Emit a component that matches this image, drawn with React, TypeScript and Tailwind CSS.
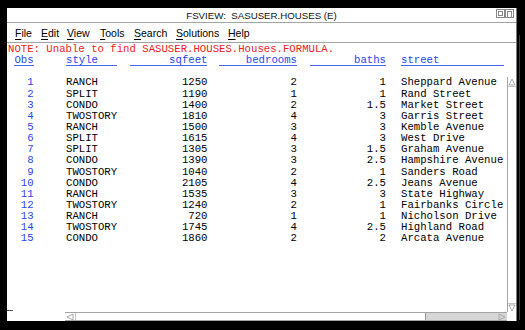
import React from "react";

const rows: [string, string, string, string, string, string][] = [
  ["1", "RANCH", "1250", "2", "1", "Sheppard Avenue"],
  ["2", "SPLIT", "1190", "1", "1", "Rand Street"],
  ["3", "CONDO", "1400", "2", "1.5", "Market Street"],
  ["4", "TWOSTORY", "1810", "4", "3", "Garris Street"],
  ["5", "RANCH", "1500", "3", "3", "Kemble Avenue"],
  ["6", "SPLIT", "1615", "4", "3", "West Drive"],
  ["7", "SPLIT", "1305", "3", "1.5", "Graham Avenue"],
  ["8", "CONDO", "1390", "3", "2.5", "Hampshire Avenue"],
  ["9", "TWOSTORY", "1040", "2", "1", "Sanders Road"],
  ["10", "CONDO", "2105", "4", "2.5", "Jeans Avenue"],
  ["11", "RANCH", "1535", "3", "3", "State Highway"],
  ["12", "TWOSTORY", "1240", "2", "1", "Fairbanks Circle"],
  ["13", "RANCH", "720", "1", "1", "Nicholson Drive"],
  ["14", "TWOSTORY", "1745", "4", "2.5", "Highland Road"],
  ["15", "CONDO", "1860", "2", "2", "Arcata Avenue"],
];

const menu = [
  { label: "File", w: "w-[26px]" },
  { label: "Edit", w: "w-[26px]" },
  { label: "View", w: "w-[33px]" },
  { label: "Tools", w: "w-[34px]" },
  { label: "Search", w: "w-[42px]" },
  { label: "Solutions", w: "w-[52px]" },
  { label: "Help", w: "w-[30px]" },
];

// column cells: Obs, style, sqfeet, bedrooms, baths, street
const cell = [
  "ml-[6px] w-[19.6px] text-right",
  "ml-[32.4px] w-[51px] text-left",
  "ml-[13px] w-[77.5px] text-right",
  "ml-[11.5px] w-[78px] text-right",
  "ml-[13px] w-[76px] text-right",
  "ml-[15px] w-[103px] text-left",
];

function Arrow({ dir }: { dir: "up" | "down" | "left" | "right" }) {
  const pts = {
    up: "1,7 4,1 7,7",
    down: "1,1 4,7 7,1",
    left: "7,1 1,4 7,7",
    right: "1,1 7,4 1,7",
  }[dir];
  return (
    <svg width="8" height="8" viewBox="0 0 8 8">
      <polygon points={pts} fill="none" stroke="#a8a8a8" strokeWidth="1" />
    </svg>
  );
}

export default function App() {
  return (
    <div className="w-[525px] h-[330px] bg-black flex items-start overflow-hidden">
      <div className="ml-[7px] mt-[8px] w-[510px] h-[313px] bg-white flex flex-col border-r border-[#7c7c7c]">
        {/* title bar */}
        <div className="h-[14px] flex items-center relative">
          <div className="flex-1 text-center text-[9.7px] leading-[14px] pt-px text-[#111] whitespace-pre font-['Liberation_Sans',sans-serif]">
            {"FSVIEW:  SASUSER.HOUSES (E)"}
          </div>
          <svg className="absolute right-[2px] top-[1px]" width="18" height="9" viewBox="0 0 18 9">
            <rect x="0.5" y="0.5" width="8" height="8" fill="white" stroke="#888" />
            <rect x="2.5" y="2.5" width="4" height="4" fill="none" stroke="#888" />
            <rect x="9.5" y="0.5" width="8" height="8" fill="white" stroke="#888" />
            <rect x="11.5" y="2.5" width="4" height="6" fill="none" stroke="#888" />
          </svg>
        </div>
        <div className="h-px bg-[#a4a4a4]" />
        {/* menu bar */}
        <div className="h-[19px] flex items-center pl-[8px] pt-[2px] text-[10.5px] text-black font-['Liberation_Sans',sans-serif]">
          {menu.map((m) => (
            <span key={m.label} className={m.w}>
              <span className="underline underline-offset-2">{m.label[0]}</span>
              {m.label.slice(1)}
            </span>
          ))}
        </div>
        <div className="h-px bg-[#a4a4a4]" />
        {/* content */}
        <div className="flex-1 flex min-h-0">
          <div className="flex-1 flex flex-col pl-px pt-[1px] font-['Liberation_Mono',monospace] text-[10.67px] leading-[11.14px] whitespace-pre">
            <div className="text-[#ee1c1c]">NOTE: Unable to find SASUSER.HOUSES.Houses.FORMULA.</div>
            <div className="flex text-[#2a46ee]">
              {["Obs", "style", "sqfeet", "bedrooms", "baths", "street"].map((h, i) => (
                <span key={h} className={`${cell[i]} leading-[10.14px] border-b border-[#4a64f0]`}>
                  {h}
                </span>
              ))}
            </div>
            <div className="h-[11.14px]" />
            {rows.map((r) => (
              <div key={r[0]} className="flex text-black">
                {r.map((v, i) => (
                  <span key={i} className={`${cell[i]} ${i === 0 ? "text-[#2a46ee]" : ""}`}>
                    {v}
                  </span>
                ))}
              </div>
            ))}
            <div className="mt-auto mb-[1px] -ml-px w-[6px] h-px bg-[#555]" />
          </div>
          {/* vertical scrollbar */}
          <div className="w-[9px] pt-[34px] flex flex-col">
            <div className="flex-1 flex flex-col border-l border-[#a4a4a4]">
              <div className="h-[10px] flex items-center justify-center border-b border-[#c8c8c8]">
                <Arrow dir="up" />
              </div>
              <div className="flex-1" />
              <div className="h-[9px] flex items-center justify-center border-t border-[#c8c8c8]">
                <Arrow dir="down" />
              </div>
            </div>
          </div>
        </div>
        {/* horizontal scrollbar */}
        <div className="h-[9px] flex">
          <div className="w-[58px]" />
          <div className="flex-1 flex border-t border-b border-[#a4a4a4]">
            <div className="w-[11px] flex items-center justify-center border-r border-[#c8c8c8]">
              <Arrow dir="left" />
            </div>
            <div className="w-[350px] border-r border-[#9a9a9a]" />
            <div className="flex-1 bg-[#d6d6d6] flex items-center justify-end pr-[1px]">
              <Arrow dir="right" />
            </div>
          </div>
          <div className="w-[9px]" />
        </div>
      </div>
      <div className="ml-[2px] mt-[35px] w-px h-[285px] bg-[#3a3a3a]" />
    </div>
  );
}
